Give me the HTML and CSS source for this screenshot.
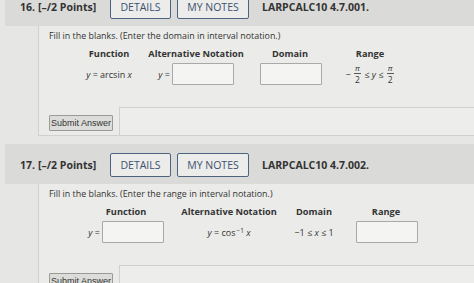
FILE: index.html
```html
<!DOCTYPE html>
<html lang="en">

<head>
    <meta charset="UTF-8">
    <meta name="viewport" content="width=device-width, initial-scale=1.0">
    <title>LARPCALC10 4.7</title>
    <link rel="stylesheet" href="styles.css">
</head>

<body>

    <!-- Question 16 -->
    <div class="question first">
        <div class="q-header">
            <span class="q-num">16.</span>
            <span class="q-points">[&ndash;/2 Points]</span>
            <button class="q-btn btn-details">DETAILS</button>
            <button class="q-btn btn-notes">MY NOTES</button>
            <span class="q-code">LARPCALC10 4.7.001.</span>
        </div>
        <div class="q-body">
            <p class="prompt">Fill in the blanks. (Enter the domain in interval notation.)</p>
            <div class="grid grid-16">
                <div class="th">Function</div>
                <div class="th">Alternative Notation</div>
                <div class="th">Domain</div>
                <div class="th">Range</div>

                <div class="td"><i>y</i>&nbsp;=&nbsp;arcsin&nbsp;<i>x</i></div>
                <div class="td"><i>y</i>&nbsp;=<input class="blank" type="text"></div>
                <div class="td"><input class="blank" type="text"></div>
                <div class="td">
                    &minus;&nbsp;<span class="frac"><span class="num">&pi;</span><span class="den">2</span></span>&nbsp;&le;&nbsp;<i>y</i>&nbsp;&le;&nbsp;<span class="frac"><span class="num">&pi;</span><span class="den">2</span></span>
                </div>
            </div>
            <div class="q-footer">
                <div class="submit-wrap"><button class="submit">Submit Answer</button></div>
                <div class="feedback"></div>
            </div>
        </div>
    </div>

    <!-- Question 17 -->
    <div class="question">
        <div class="q-header">
            <span class="q-num">17.</span>
            <span class="q-points">[&ndash;/2 Points]</span>
            <button class="q-btn btn-details">DETAILS</button>
            <button class="q-btn btn-notes">MY NOTES</button>
            <span class="q-code">LARPCALC10 4.7.002.</span>
        </div>
        <div class="q-body">
            <p class="prompt">Fill in the blanks. (Enter the range in interval notation.)</p>
            <div class="grid grid-17">
                <div class="th">Function</div>
                <div class="th">Alternative Notation</div>
                <div class="th">Domain</div>
                <div class="th">Range</div>

                <div class="td"><i>y</i>&nbsp;=<input class="blank" type="text"></div>
                <div class="td"><i>y</i>&nbsp;=&nbsp;cos<sup>&minus;1</sup>&nbsp;<i>x</i></div>
                <div class="td">&minus;1&nbsp;&le;&nbsp;<i>x</i>&nbsp;&le;&nbsp;1</div>
                <div class="td"><input class="blank" type="text"></div>
            </div>
            <div class="q-footer">
                <div class="submit-wrap"><button class="submit">Submit Answer</button></div>
                <div class="feedback"></div>
            </div>
        </div>
    </div>

</body>

</html>
```

FILE: styles.css
```css
body {
    font-family: 'Open Sans', 'DejaVu Sans', sans-serif;
    background-color: #e6e6e4;
    color: #333;
    margin: 0;
    overflow: hidden;
}

.question {
    margin-top: 8px;
}

.question.first {
    margin-top: -14px;
}

/* header band */
.q-header {
    display: flex;
    align-items: center;
    margin-left: 5px;
    height: 40px;
    padding: 2px 0 0 15px;
    box-sizing: border-box;
    background-color: #dadad8;
    font-size: 10.5px;
    font-weight: bold;
    color: #333;
}

.q-num {
    width: 18px;
}

.q-points {
    width: 72px;
}

.q-btn {
    font-family: inherit;
    font-size: 10.5px;
    color: #3b5170;
    background-color: #ececea;
    border: 1px solid #4d6382;
    border-radius: 2px;
    height: 24px;
    padding: 0;
    margin-right: 6px;
    font-weight: normal;
}

.btn-details {
    width: 61px;
}

.btn-notes {
    width: 72px;
    margin-right: 13px;
}

/* question body */
.q-body {
    margin-left: 38px;
    padding: 3px 0 0 10px;
    background-color: #ebebe9;
    border-left: 1px solid #d0d0ce;
    border-bottom: 1px solid #d0d0ce;
    font-size: 9px;
    color: #333;
}

.prompt {
    margin: 0;
    font-size: 8.9px;
    line-height: 14px;
}

.grid {
    display: grid;
    margin-left: 31px;
    align-items: center;
}

.grid-16 {
    grid-template-columns: 58px 116px 72px 88px;
}

.grid-17 {
    grid-template-columns: 92px 114px 56px 88px;
}

.th {
    font-weight: bold;
    font-size: 9.2px;
    text-align: center;
    line-height: 12px;
    margin-top: 5px;
}

.td {
    display: flex;
    align-items: center;
    justify-content: center;
    height: 22px;
    margin-top: 3px;
    white-space: nowrap;
}

sup {
    font-size: 6.5px;
    line-height: 0;
    margin-left: 1px;
    position: relative;
    top: -1px;
}

.blank {
    width: 62px;
    height: 22px;
    box-sizing: border-box;
    margin: 0 0 0 2px;
    border: 1px solid #a9a9a7;
    border-radius: 1px;
    background-color: #f4f4f2;
}

.frac {
    display: inline-flex;
    flex-direction: column;
    align-items: center;
    margin: 0 1px;
}

.frac .num {
    font-style: italic;
    font-size: 8px;
    line-height: 10px;
    border-bottom: 1px solid #555;
    padding: 0 1px;
}

.frac .den {
    font-size: 8.5px;
    line-height: 11px;
}

/* submit row */
.q-footer {
    display: flex;
    margin-top: 22px;
    margin-left: -10px;
}

.submit-wrap {
    width: 80px;
    padding: 8px 0 4px 10px;
    box-sizing: border-box;
}

.submit {
    font-family: 'Liberation Sans', Arial, sans-serif;
    font-size: 9px;
    white-space: nowrap;
    color: #333;
    background-color: #dcdcda;
    border: 1px solid #9a9a98;
    border-radius: 1px;
    width: 64px;
    height: 16px;
    padding: 0;
}

.feedback {
    flex: 1;
    border-top: 1px solid #d0d0ce;
    border-left: 1px solid #d0d0ce;
    background-color: #ededeb;
}
```
